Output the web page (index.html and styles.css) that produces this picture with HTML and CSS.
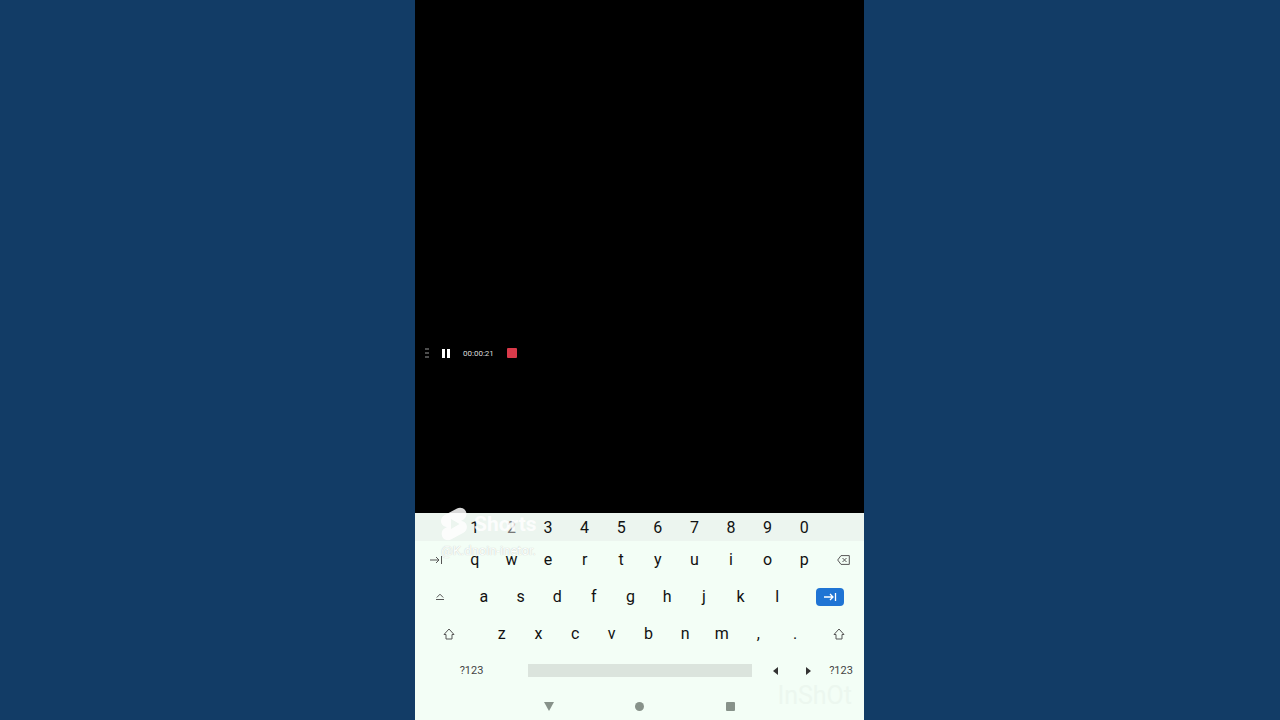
FILE: index.html
```html
<!DOCTYPE html>
<html lang="en">

<head>
    <meta charset="utf-8">
    <meta name="viewport" content="width=device-width, initial-scale=1">
    <title>Shorts</title>
    <link rel="stylesheet" href="styles.css">
</head>

<body>
    <main class="phone">
        <div class="screen">
            <div class="recorder">
                <svg class="handle" viewBox="0 0 4 10"><path d="M0 1h4M0 5h4M0 9h4" stroke="#999" fill="none"/></svg>
                <button class="rec-button" aria-label="Pause"><svg width="8" height="9" viewBox="0 0 8 9"><path d="M0 0h3v9H0zM5 0h3v9H5z" fill="#fff"/></svg></button>
                <span class="time">00:00:21</span>
                <button class="rec-button" aria-label="Stop"><svg width="10" height="10" viewBox="0 0 10 10"><rect width="10" height="10" rx="1" fill="#d93a4a"/></svg></button>
            </div>
        </div>

        <div class="keyboard">
            <div class="row row-top row-numbers">
                <span></span>
                <button>1</button>
                <button class="faded">2</button>
                <button>3</button>
                <button>4</button>
                <button>5</button>
                <button>6</button>
                <button>7</button>
                <button>8</button>
                <button>9</button>
                <button>0</button>
                <span></span>
            </div>
            <div class="row row-top">
                <button aria-label="Tab"><svg width="14" height="10" viewBox="0 0 14 10"><path d="M1 5h9M7 2l3 3-3 3M12.500 1v8" class="line"/></svg></button>
                <button>q</button>
                <button>w</button>
                <button>e</button>
                <button>r</button>
                <button>t</button>
                <button>y</button>
                <button>u</button>
                <button>i</button>
                <button>o</button>
                <button>p</button>
                <button aria-label="Backspace"><svg width="13" height="10" viewBox="0 0 13 10"><path d="M4 .6h8.300v8.800H4L.7 5zM5.500 3l4 4M9.500 3l-4 4" class="line"/></svg></button>
            </div>
            <div class="row row-home">
                <button aria-label="Caps lock"><svg width="8" height="8" viewBox="0 0 8 8"><path d="M.8 4.500L4 1.200l3.200 3.300M0 6.500h8" class="line"/></svg></button>
                <button>a</button>
                <button>s</button>
                <button>d</button>
                <button>f</button>
                <button>g</button>
                <button>h</button>
                <button>j</button>
                <button>k</button>
                <button>l</button>
                <button aria-label="Next"><span class="next"><svg width="14" height="10" viewBox="0 0 14 10"><path d="M1 5h9M7 2l3 3-3 3M12.500 1v8" stroke="#fff" stroke-width="1.300" fill="none"/></svg></span></button>
            </div>
            <div class="row row-bottom">
                <button aria-label="Shift"><svg width="12" height="12" viewBox="0 0 12 12"><path d="M6 1l5 5.500H9V11H3V6.500H1z" class="line"/></svg></button>
                <button>z</button>
                <button>x</button>
                <button>c</button>
                <button>v</button>
                <button>b</button>
                <button>n</button>
                <button>m</button>
                <button>,</button>
                <button>.</button>
                <button aria-label="Shift"><svg width="12" height="12" viewBox="0 0 12 12"><path d="M6 1l5 5.500H9V11H3V6.500H1z" class="line"/></svg></button>
            </div>
            <div class="row row-space">
                <button class="symbols">?123</button>
                <button class="space" aria-label="Space"></button>
                <button aria-label="Left"><svg width="5" height="8" viewBox="0 0 5 8"><path d="M5 0v8L0 4z" fill="#333"/></svg></button>
                <button aria-label="Right"><svg width="5" height="8" viewBox="0 0 5 8"><path d="M0 0v8l5-4z" fill="#333"/></svg></button>
                <button class="symbols">?123</button>
            </div>
            <div class="row row-nav">
                <span></span>
                <button aria-label="Back"><svg width="10" height="9" viewBox="0 0 10 9"><path d="M0 0h10L5 9z" fill="#87928a"/></svg></button>
                <button aria-label="Home"><svg width="9" height="9" viewBox="0 0 9 9"><circle cx="4.500" cy="4.500" r="4.500" fill="#87928a"/></svg></button>
                <button aria-label="Recents"><svg width="9" height="9" viewBox="0 0 9 9"><rect width="9" height="9" rx="1" fill="#87928a"/></svg></button>
                <span></span>
            </div>

            <div class="watermark">
                <div class="brand">
                    <svg width="26" height="34" viewBox="0 0 26 34"><path fill-rule="evenodd" d="M16 1.500c3-1.600 7-.6 8.700 2.500s.5 7-2.500 8.700L20 14c2.400.1 4.500 1.400 5.400 3.500 1.300 3 .1 6.600-2.900 8.200L10 32.400c-3 1.600-7 .5-8.600-2.500s-.6-7 2.400-8.600L6 20c-2.400-.1-4.600-1.400-5.500-3.500-1.300-3-.1-6.700 2.800-8.300zM10 12v10l8.500-5z" fill="#fff"/></svg>
                    <span>Shorts</span>
                </div>
                <div class="channel">@K.dnoin-inetor.</div>
            </div>
            <div class="inshot">InShOt</div>
        </div>
    </main>
</body>

</html>
```

FILE: styles.css
```css
* {
    box-sizing: border-box;
}
body {
    margin: 0;
    min-height: 100vh;
    display: grid;
    grid-template-columns: 415fr 449fr 416fr;
    background-color: #123c66;
    font-family: Roboto, "Liberation Sans", sans-serif;
}
button {
    display: flex;
    align-items: center;
    justify-content: center;
    min-width: 0;
    padding: 0;
    border: 0;
    background: none;
    color: #111;
    font: inherit;
}
svg {
    display: block;
}
.phone {
    grid-column: 2;
    display: flex;
    flex-direction: column;
    background-color: #000;
}
.screen {
    flex: 1;
    position: relative;
}
.recorder {
    position: absolute;
    top: 346px;
    left: 10px;
    display: flex;
    align-items: center;
    gap: 13px;
    height: 14px;
}
.handle {
    width: 4px;
    height: 10px;
}
.time {
    color: #ddd;
    font-size: 8px;
}
.keyboard {
    position: relative;
    background-color: #f3fef6;
}
.row {
    display: grid;
    height: 37px;
    font-size: 16px;
}
.row-top {
    grid-template-columns: 42fr repeat(10, 37fr) 42fr;
}
.row-numbers {
    height: 28px;
    background-color: #ecf5ef;
}
.row-home {
    grid-template-columns: 51fr repeat(9, 37fr) 69fr;
}
.row-bottom {
    grid-template-columns: 69fr repeat(9, 37fr) 51fr;
}
.row-space {
    grid-template-columns: 113fr 224fr 46fr 20fr 46fr;
    align-items: center;
}
.row-nav {
    grid-template-columns: 88fr repeat(3, 91fr) 88fr;
    height: 31px;
    padding-top: 3px;
}
.line {
    fill: none;
    stroke: #555;
}
.next {
    padding: 4px 7px;
    border-radius: 4px;
    background-color: #1f74d4;
}
.space {
    height: 13px;
    background-color: #dbe4dd;
}
.symbols {
    color: #444;
    font-size: 11px;
}
.faded {
    color: #777;
}
.watermark {
    position: absolute;
    top: -6px;
    left: 26px;
    pointer-events: none;
}
.brand {
    display: flex;
    align-items: center;
    gap: 7px;
    height: 34px;
    color: #fff;
    font-size: 21px;
    font-weight: bold;
    opacity: 0.85;
}
.channel {
    color: #fff;
    font-size: 13px;
    line-height: 20px;
    text-shadow: 0 0 1px #aaa;
    opacity: 0.8;
}
.inshot {
    position: absolute;
    right: 12px;
    bottom: 10px;
    color: #ecf7ef;
    font-size: 25px;
    line-height: 28px;
    pointer-events: none;
}
```
